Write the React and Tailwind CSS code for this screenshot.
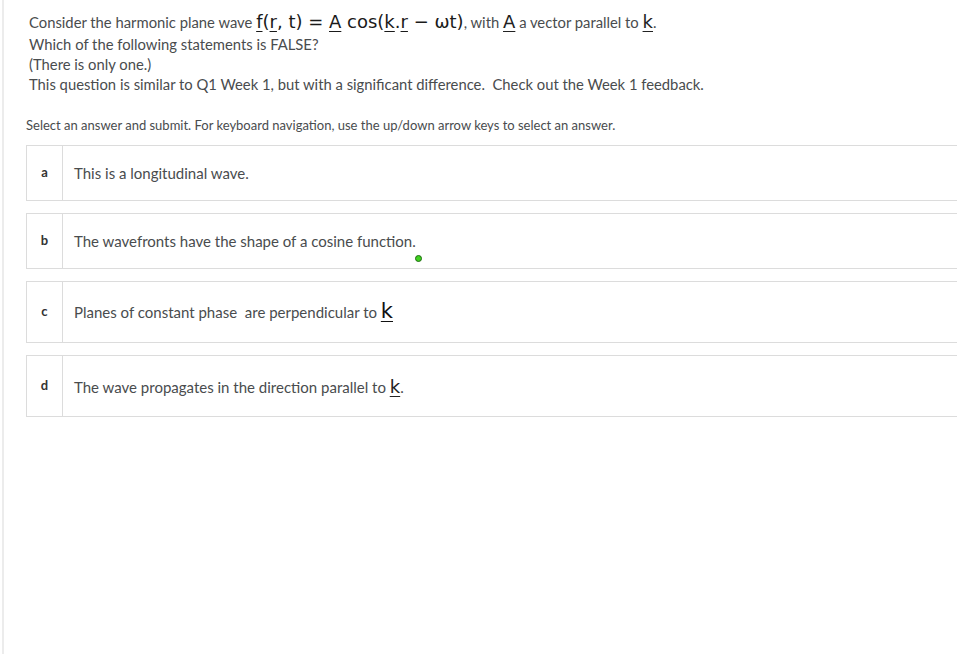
import React from 'react';

const V = ({ children }) => (
  <span className="underline decoration-1 underline-offset-[3px]">{children}</span>
);

const M = ({ children }) => (
  <span className="font-['DejaVu_Sans',sans-serif] text-[18px] text-[#1a1a1a] whitespace-nowrap">{children}</span>
);

const options = [
  { letter: 'a', text: <>This is a longitudinal wave.</>, h: 'h-[56px]' },
  { letter: 'b', text: <>The wavefronts have the shape of a cosine function.</>, h: 'h-[56px]' },
  {
    letter: 'c',
    text: (
      <>
        Planes of constant phase&nbsp; are perpendicular to{' '}
        <span className="font-['DejaVu_Sans',sans-serif] text-[21px] text-[#111]">
          <V>k</V>
        </span>
      </>
    ),
    h: 'h-[62px]',
  },
  {
    letter: 'd',
    text: (
      <>
        The wave propagates in the direction parallel to{' '}
        <span className="font-['DejaVu_Sans',sans-serif] text-[18px] text-[#222]">
          <V>k</V>
        </span>
        .
      </>
    ),
    h: 'h-[62px]',
  },
];

export default function App() {
  return (
    <div className="min-h-screen w-full overflow-hidden bg-white font-['Lato',sans-serif] text-[#494c4e]">
      <div className="ml-[2px] min-h-screen border-l-2 border-[#ececec] pl-[22px] pt-[10px]">
        <div className="pl-[3px] text-[14.8px] leading-[20px]">
          <p className="leading-[23px]">
            Consider the harmonic plane wave{' '}
            <M>
              <V>f</V>(<V>r</V>, t) = <V>A</V> cos(<V>k</V>.<V>r</V> − ωt)
            </M>
            , with{' '}
            <span className="font-['DejaVu_Sans',sans-serif] text-[18px] text-[#222]">
              <V>A</V>
            </span>{' '}
            a vector parallel to{' '}
            <span className="font-['DejaVu_Sans',sans-serif] text-[18px] text-[#222]">
              <V>k</V>
            </span>
            .
          </p>
          <p>Which of the following statements is FALSE?</p>
          <p>(There is only one.)</p>
          <p>This question is similar to Q1 Week 1, but with a significant difference.&nbsp; Check out the Week 1 feedback.</p>
        </div>

        <p className="mt-[22px] text-[13px] leading-[18px]">
          Select an answer and submit. For keyboard navigation, use the up/down arrow keys to select an answer.
        </p>

        <div className="mt-[11px] flex w-[950px] flex-col gap-[12px]">
          {options.map((o) => (
            <div key={o.letter} className={`relative flex border border-[#dcdcdc] ${o.h}`}>
              <div className="flex w-[36px] shrink-0 items-center justify-center border-r border-[#dcdcdc] text-[13px] font-bold text-[#333]">
                {o.letter}
              </div>
              <div className="flex items-center pl-[11px] text-[15px]">
                <span>{o.text}</span>
              </div>
              {o.letter === 'b' && (
                <span className="absolute left-[388px] top-[41px] h-[7px] w-[7px] rounded-full border border-[#1f6b12] bg-[#3fd11f]" />
              )}
            </div>
          ))}
        </div>
      </div>
    </div>
  );
}
